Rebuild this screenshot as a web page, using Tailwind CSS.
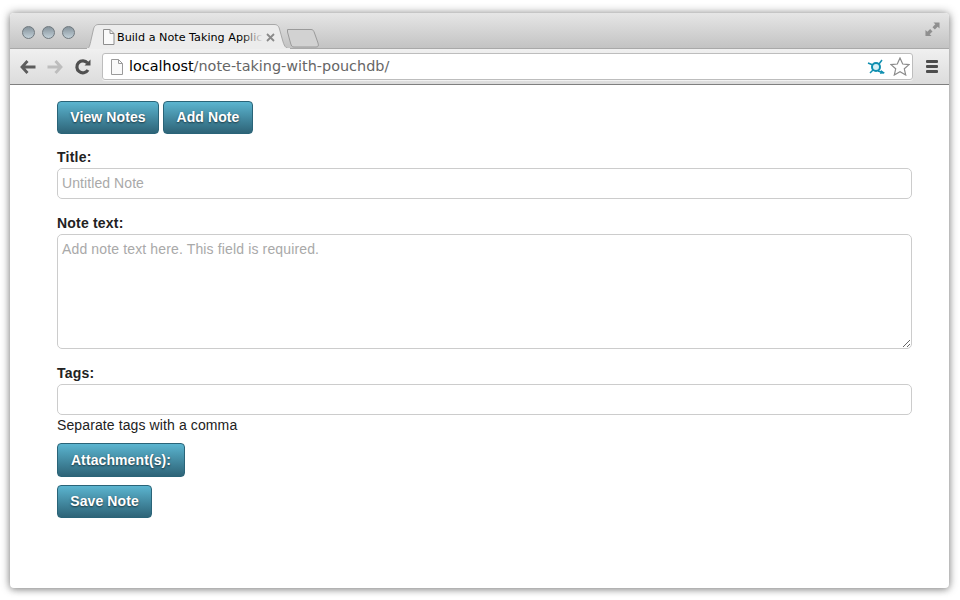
<!DOCTYPE html>
<html lang="en">

<head>
    <meta charset="UTF-8">
    <title>Build a Note Taking Application</title>
    <script src="https://cdn.jsdelivr.net/npm/@tailwindcss/browser@4"></script>
</head>

<body class="bg-white w-[960px] h-[600px] overflow-hidden pt-[13px] pl-[10px] font-['Liberation_Sans',sans-serif] text-[#222]">
    <div class="w-[939px] h-[575px] bg-white rounded-[4px] overflow-hidden shadow-[0_0_10px_rgba(0,0,0,0.42),0_2px_6px_rgba(0,0,0,0.2)]">

        <!-- tab strip -->
        <div class="relative h-[36px] flex bg-gradient-to-b from-[#e6e6e6] to-[#c3c3c3] border-b border-[#a9a9a9]">
            <div class="flex gap-[7px] pl-[12px] pt-[13px]">
                <span class="w-[13px] h-[13px] rounded-full border border-[#6f787e] bg-gradient-to-b from-[#86939c] to-[#c2d0d8]"></span>
                <span class="w-[13px] h-[13px] rounded-full border border-[#6f787e] bg-gradient-to-b from-[#86939c] to-[#c2d0d8]"></span>
                <span class="w-[13px] h-[13px] rounded-full border border-[#6f787e] bg-gradient-to-b from-[#86939c] to-[#c2d0d8]"></span>
            </div>
            <!-- active tab -->
            <div class="absolute left-[76px] top-[11px] w-[212px] h-[25px]">
                <svg class="absolute inset-0" width="212" height="25" viewBox="0 0 212 25">
                    <path d="M0.500 25 C3 25 4 21 5 16 L7.500 5 C8.500 1.500 10 0.500 13 0.500 L188 0.500 C191 0.500 192.500 1.500 193.500 5 L196.500 16 C198 21 199 25 205 25 Z" fill="#ececec" stroke="#a8a8a8" />
                    <path d="M1 25 L204 25" stroke="#ececec" stroke-width="2" />
                </svg>
                <svg class="absolute left-[16px] top-[5px]" width="13" height="16" viewBox="0 0 13 16">
                    <path d="M1.500 0.500 H8 L12 4.500 V15.500 H1.500 Z" fill="#fafafa" stroke="#8e8e8e" />
                    <path d="M8 0.500 V4.500 H12" fill="none" stroke="#8e8e8e" />
                </svg>
                <span class="absolute left-[31px] top-[6px] whitespace-nowrap text-[11.2px] leading-[16px] text-black font-['DejaVu_Sans',sans-serif]">Build a Note Taking Applic</span>
                <span class="absolute left-[155px] top-[3px] w-[22px] h-[20px] bg-gradient-to-r from-[#ececec]/0 to-[#ececec]"></span>
                <svg class="absolute left-[180px] top-[9px]" width="9" height="9" viewBox="0 0 9 9">
                    <path d="M1 1 L8 8 M8 1 L1 8" stroke="#8a8a8a" stroke-width="1.800" />
                </svg>
            </div>
            <!-- new tab -->
            <svg class="absolute left-[277px] top-[16px]" width="33" height="19" viewBox="0 0 33 19">
                <path d="M0.500 0.500 H24 C26 0.500 26.500 1.500 27.500 4 L31 14 C32 17 31 18 29 18 H7 C5 18 4.500 17 3.500 14 L0.500 3 Z" fill="#d2d2d2" stroke="#9a9a9a" />
            </svg>
            <!-- fullscreen -->
            <svg class="absolute left-[915px] top-[9px]" width="15" height="15" viewBox="0 0 16 16">
                <path d="M9 0.500 H15.500 V7 L13.500 5 L10.500 8 L8 5.500 L11 2.500 Z" fill="#8f8f8f" />
                <path d="M0.500 8.500 L2.500 10.500 L5.500 7.500 L8 10 L5 13 L7 15 H0.500 Z" fill="#8f8f8f" />
            </svg>
        </div>

        <!-- toolbar -->
        <div class="h-[36px] flex items-center bg-gradient-to-b from-[#f0f0f0] to-[#dcdcdc] border-b border-[#7f7f7f]">
            <div class="flex items-center gap-[11px] pl-[10px] w-[92px]">
                <svg width="16" height="14" viewBox="0 0 16 14">
                    <path d="M7.500 1 L2 7 L7.500 13 M2.500 7 H15.500" fill="none" stroke="#5c5c5c" stroke-width="2.800" />
                </svg>
                <svg width="16" height="14" viewBox="0 0 16 14">
                    <path d="M8.500 1 L14 7 L8.500 13 M13.500 7 H0.500" fill="none" stroke="#bdbdbd" stroke-width="2.800" />
                </svg>
                <svg class="ml-[1px]" width="16" height="16" viewBox="0 0 16 16">
                    <path d="M13 11 A6 6 0 1 1 12.500 4" fill="none" stroke="#505050" stroke-width="3.200" />
                    <path d="M9.500 6.500 H15.500 V0.500 Z" fill="#505050" />
                </svg>
            </div>
            <div class="relative w-[811px] h-[27px] flex items-center bg-white border border-[#bdbdbd] rounded-[3px] pl-[8px] shadow-[0_1px_0_rgba(255,255,255,0.6)]">
                <svg width="12" height="16" viewBox="0 0 12 16">
                    <path d="M0.500 0.500 H7.500 L11.500 4.500 V15.500 H0.500 Z" fill="#fafafa" stroke="#9a9a9a" />
                    <path d="M7.500 0.500 V4.500 H11.500" fill="none" stroke="#9a9a9a" />
                </svg>
                <span class="ml-[6px] text-[14.4px] font-['DejaVu_Sans',sans-serif] whitespace-nowrap text-[#666]"><span class="text-black">localhost</span>/note-taking-with-pouchdb/</span>
                <svg class="absolute left-[764px] top-[4px]" width="19" height="18" viewBox="0 0 19 18">
                    <circle cx="9" cy="9" r="4" fill="#d8f0f6" stroke="#0f8fb0" stroke-width="2" />
                    <path d="M12 6 L15 2 M6 12 L3 15 M6 7 L1 5 M11 13 L17 15" stroke="#0f8fb0" stroke-width="1.500" />
                    <path d="M14 12 L18 15 L13 16 Z" fill="#0f8fb0" />
                </svg>
                <svg class="absolute left-[787px] top-[3px]" width="20" height="19" viewBox="0 0 20 19">
                    <path d="M10 1 L12.700 7 L19 7.600 L14.300 11.800 L15.700 18 L10 14.800 L4.300 18 L5.700 11.800 L1 7.600 L7.300 7 Z" fill="#fff" stroke="#8c8c8c" stroke-width="1.200" />
                </svg>
            </div>
            <div class="ml-[13px] flex flex-col gap-[2px]">
                <span class="w-[12px] h-[3px] bg-[#4d4d4d] rounded-[1px]"></span>
                <span class="w-[12px] h-[3px] bg-[#4d4d4d] rounded-[1px]"></span>
                <span class="w-[12px] h-[3px] bg-[#4d4d4d] rounded-[1px]"></span>
            </div>
        </div>

        <!-- page -->
        <main class="pl-[47px] w-[902px] pt-[16px]">
            <div class="flex gap-[4px]">
                <button class="h-[33px] w-[102px] rounded-[4px] border border-[#2a6478] bg-gradient-to-b from-[#5bb5d0] to-[#2e6478] text-white font-bold text-[14px] tracking-[0.1px] [text-shadow:0_1px_2px_rgba(0,0,0,0.6)]">View Notes</button>
                <button class="h-[33px] w-[90px] rounded-[4px] border border-[#2a6478] bg-gradient-to-b from-[#5bb5d0] to-[#2e6478] text-white font-bold text-[14px] tracking-[0.1px] [text-shadow:0_1px_2px_rgba(0,0,0,0.6)]">Add Note</button>
            </div>

            <label class="block mt-[14px] text-[14px] leading-[18px] font-bold tracking-[0.25px]">Title:</label>
            <input class="block mt-[2px] w-[855px] h-[31px] px-[4px] pb-[2px] bg-white border border-[#cccccc] rounded-[5px] text-[14px] tracking-[0.08px] placeholder:text-[#a9a9a9] outline-none" placeholder="Untitled Note">

            <label class="block mt-[15px] text-[14px] leading-[18px] font-bold tracking-[0.2px]">Note text:</label>
            <textarea class="block mt-[2px] w-[855px] h-[115px] px-[4px] py-[6px] bg-white border border-[#cccccc] rounded-[5px] text-[14px] tracking-[0.14px] leading-[17px] placeholder:text-[#a9a9a9] outline-none" placeholder="Add note text here. This field is required."></textarea>

            <label class="block mt-[15px] text-[14px] leading-[18px] font-bold tracking-[0.2px]">Tags:</label>
            <input class="block mt-[2px] w-[855px] h-[31px] px-[4px] bg-white border border-[#cccccc] rounded-[5px] text-[14px] outline-none">
            <p class="mt-[1px] text-[14px] leading-[18px] tracking-[0.11px]">Separate tags with a comma</p>

            <button class="block mt-[9px] h-[34px] w-[128px] rounded-[4px] border border-[#2a6478] bg-gradient-to-b from-[#5bb5d0] to-[#2e6478] text-white font-bold text-[14px] tracking-[0.1px] [text-shadow:0_1px_2px_rgba(0,0,0,0.6)]">Attachment(s):</button>
            <button class="block mt-[8px] h-[33px] w-[95px] rounded-[4px] border border-[#2a6478] bg-gradient-to-b from-[#5bb5d0] to-[#2e6478] text-white font-bold text-[14px] tracking-[0.1px] [text-shadow:0_1px_2px_rgba(0,0,0,0.6)]">Save Note</button>
        </main>
    </div>
</body>

</html>
